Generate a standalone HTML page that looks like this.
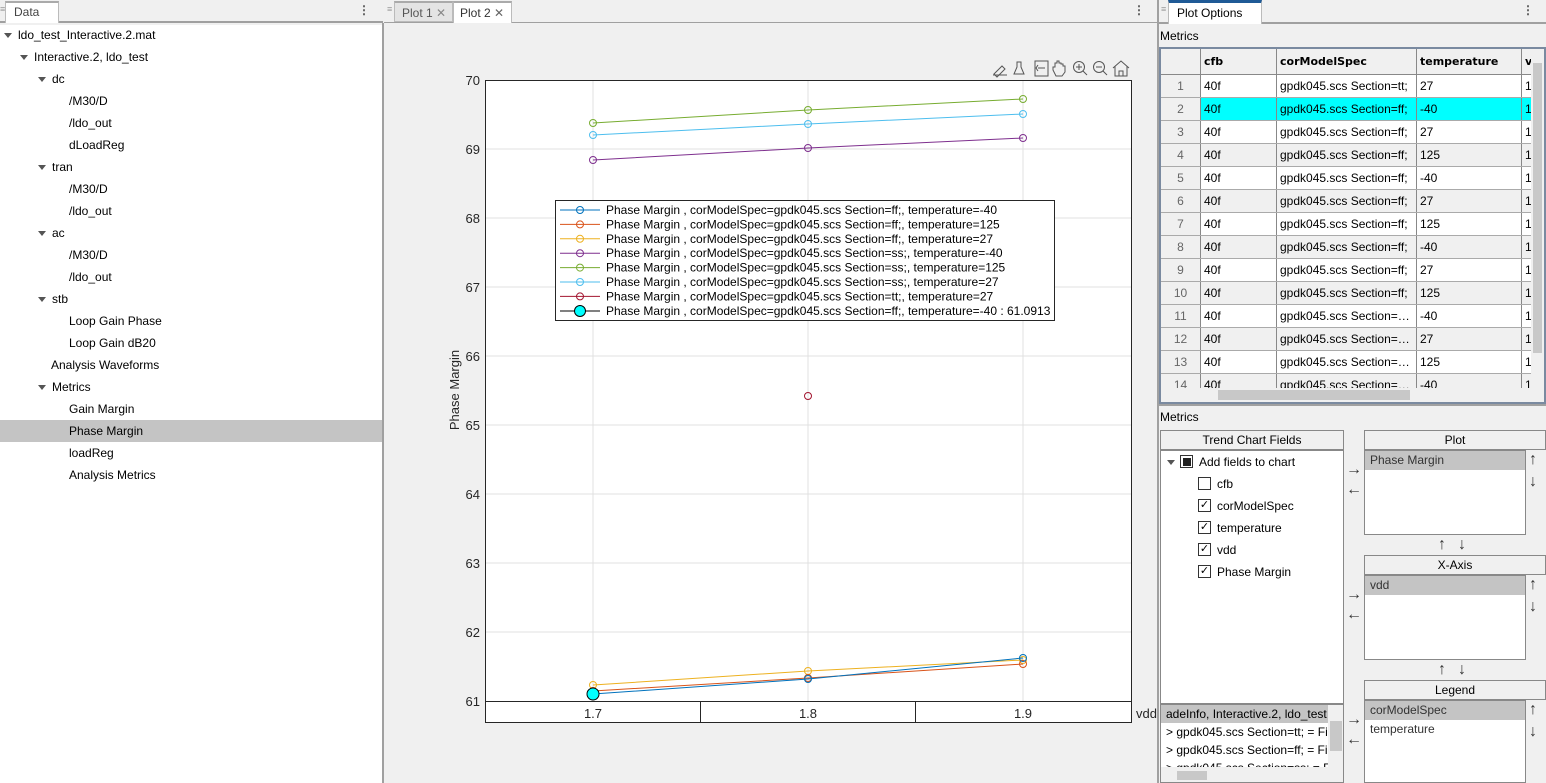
<!DOCTYPE html>
<html><head><meta charset="utf-8"><style>
*{box-sizing:border-box;margin:0;padding:0}
body{width:1546px;height:783px;overflow:hidden;background:#f0f0f0;font-family:"Liberation Sans",sans-serif;font-size:12px;color:#000;position:relative}
.a{position:absolute}
.t{position:absolute;white-space:nowrap}
.tri{display:inline-block;width:0;height:0;border-left:4px solid transparent;border-right:4px solid transparent;border-top:5px solid #555;margin-right:6px;vertical-align:1px}
.cb{position:absolute;width:13px;height:13px;border:1px solid #333;background:#fff;font-size:11px;line-height:11px;text-align:center}
.ar{position:absolute;font-size:16px;font-weight:bold;color:#333;line-height:16px}
</style></head><body>

<div class="a" style="left:0;top:0;width:383px;height:23px;background:#f0f0f0;border-bottom:2px solid #a0a0a0"></div>
<div class="a" style="left:5px;top:1px;width:54px;height:22px;background:#fff;border:1px solid #bbb;border-top:2px solid #aaa;border-bottom:none"></div>
<div class="t" style="left:14px;top:5px;color:#444">Data</div>
<div class="t" style="left:0;top:4px;color:#999;font-size:9px">≡</div>
<div class="t" style="left:358px;top:3px;font-weight:bold;color:#555">⋮</div>
<div class="a" style="left:0;top:25px;width:382px;height:758px;background:#fff"></div>
<div class="a" style="left:382px;top:23px;width:2px;height:760px;background:#a0a0a0"></div>
<div class="a" style="left:0;top:420px;width:382px;height:22px;background:#c4c4c4"></div>
<div class="t" style="left:4px;top:28px"><span class="tri"></span>ldo_test_Interactive.2.mat</div>
<div class="t" style="left:20px;top:50px"><span class="tri"></span>Interactive.2, ldo_test</div>
<div class="t" style="left:38px;top:72px"><span class="tri"></span>dc</div>
<div class="t" style="left:69px;top:94px">/M30/D</div>
<div class="t" style="left:69px;top:116px">/ldo_out</div>
<div class="t" style="left:69px;top:138px">dLoadReg</div>
<div class="t" style="left:38px;top:160px"><span class="tri"></span>tran</div>
<div class="t" style="left:69px;top:182px">/M30/D</div>
<div class="t" style="left:69px;top:204px">/ldo_out</div>
<div class="t" style="left:38px;top:226px"><span class="tri"></span>ac</div>
<div class="t" style="left:69px;top:248px">/M30/D</div>
<div class="t" style="left:69px;top:270px">/ldo_out</div>
<div class="t" style="left:38px;top:292px"><span class="tri"></span>stb</div>
<div class="t" style="left:69px;top:314px">Loop Gain Phase</div>
<div class="t" style="left:69px;top:336px">Loop Gain dB20</div>
<div class="t" style="left:51px;top:358px">Analysis Waveforms</div>
<div class="t" style="left:38px;top:380px"><span class="tri"></span>Metrics</div>
<div class="t" style="left:69px;top:402px">Gain Margin</div>
<div class="t" style="left:69px;top:424px">Phase Margin</div>
<div class="t" style="left:69px;top:446px">loadReg</div>
<div class="t" style="left:69px;top:468px">Analysis Metrics</div>

<div class="a" style="left:384px;top:22px;width:773px;height:1px;background:#a0a0a0"></div>
<div class="t" style="left:387px;top:4px;color:#999;font-size:9px">≡</div>
<div class="a" style="left:394px;top:1px;width:59px;height:21px;background:#e4e4e4;border:1px solid #bbb;border-top:2px solid #aaa"></div>
<div class="t" style="left:402px;top:6px;color:#555">Plot 1 <span style="color:#888">✕</span></div>
<div class="a" style="left:453px;top:1px;width:59px;height:22px;background:#fff;border:1px solid #bbb;border-top:2px solid #aaa;border-bottom:none"></div>
<div class="t" style="left:460px;top:6px;color:#333">Plot 2 <span style="color:#666">✕</span></div>
<div class="t" style="left:1133px;top:3px;font-weight:bold;color:#555">⋮</div>
<div class="a" style="left:1157px;top:0;width:2px;height:783px;background:#a0a0a0"></div>

<svg class="a" style="left:384px;top:23px" width="773" height="760" viewBox="384 23 773 760" font-family="Liberation Sans, sans-serif">
<rect x="485.5" y="80.5" width="646" height="642" fill="#fff" stroke="#262626"/>
<g stroke="#e0e0e0">
<line x1="593" y1="81" x2="593" y2="701"/><line x1="808" y1="81" x2="808" y2="701"/><line x1="1023" y1="81" x2="1023" y2="701"/>
<line x1="486" y1="149" x2="1131" y2="149"/><line x1="486" y1="218" x2="1131" y2="218"/><line x1="486" y1="287" x2="1131" y2="287"/><line x1="486" y1="356" x2="1131" y2="356"/><line x1="486" y1="425" x2="1131" y2="425"/><line x1="486" y1="494" x2="1131" y2="494"/><line x1="486" y1="563" x2="1131" y2="563"/><line x1="486" y1="632" x2="1131" y2="632"/>
</g>
<line x1="486" y1="701.5" x2="1131" y2="701.5" stroke="#262626"/>
<line x1="700.5" y1="701" x2="700.5" y2="722" stroke="#262626"/><line x1="915.5" y1="701" x2="915.5" y2="722" stroke="#262626"/>
<g font-size="13" fill="#262626" text-anchor="end">
<text x="480" y="85">70</text><text x="480" y="154">69</text><text x="480" y="223">68</text><text x="480" y="292">67</text><text x="480" y="361">66</text><text x="480" y="430">65</text><text x="480" y="499">64</text><text x="480" y="568">63</text><text x="480" y="637">62</text><text x="480" y="706">61</text>
</g>
<g font-size="13" fill="#262626" text-anchor="middle"><text x="593" y="718">1.7</text><text x="808" y="718">1.8</text><text x="1023" y="718">1.9</text></g>
<text x="1136" y="718" font-size="13" fill="#262626">vdd</text>
<text transform="translate(459,390) rotate(-90)" font-size="13" fill="#262626" text-anchor="middle">Phase Margin</text>
<g fill="none" stroke-width="1">
<g stroke="#77AC30"><polyline points="593,123 808,110 1023,99"/><circle cx="593" cy="123" r="3.5"/><circle cx="808" cy="110" r="3.5"/><circle cx="1023" cy="99" r="3.5"/></g>
<g stroke="#4DBEEE"><polyline points="593,135 808,124 1023,114"/><circle cx="593" cy="135" r="3.5"/><circle cx="808" cy="124" r="3.5"/><circle cx="1023" cy="114" r="3.5"/></g>
<g stroke="#7E2F8E"><polyline points="593,160 808,148 1023,138"/><circle cx="593" cy="160" r="3.5"/><circle cx="808" cy="148" r="3.5"/><circle cx="1023" cy="138" r="3.5"/></g>
<g stroke="#A2142F"><circle cx="808" cy="396" r="3.5"/></g>
<g stroke="#EDB120"><polyline points="593,685 808,671 1023,660"/><circle cx="593" cy="685" r="3.5"/><circle cx="808" cy="671" r="3.5"/><circle cx="1023" cy="660" r="3.5"/></g>
<g stroke="#D95319"><polyline points="593,691 808,678 1023,664"/><circle cx="593" cy="691" r="3.5"/><circle cx="808" cy="678" r="3.5"/><circle cx="1023" cy="664" r="3.5"/></g>
<g stroke="#0072BD"><polyline points="593,694 808,679 1023,658"/><circle cx="808" cy="679" r="3.5"/><circle cx="1023" cy="658" r="3.5"/></g>
</g>
<circle cx="593" cy="694" r="6" fill="#00ffff" stroke="#000"/>
<rect x="555.5" y="200.5" width="499" height="120" fill="#fff" stroke="#262626"/>
<g font-size="12" fill="#000">
<g transform="translate(0,210)"><line x1="560" x2="600" stroke="#0072BD"/><circle cx="580" r="3.5" fill="none" stroke="#0072BD"/><text x="606" y="4">Phase Margin , corModelSpec=gpdk045.scs Section=ff;, temperature=-40</text></g>
<g transform="translate(0,224.4)"><line x1="560" x2="600" stroke="#D95319"/><circle cx="580" r="3.5" fill="none" stroke="#D95319"/><text x="606" y="4">Phase Margin , corModelSpec=gpdk045.scs Section=ff;, temperature=125</text></g>
<g transform="translate(0,238.8)"><line x1="560" x2="600" stroke="#EDB120"/><circle cx="580" r="3.5" fill="none" stroke="#EDB120"/><text x="606" y="4">Phase Margin , corModelSpec=gpdk045.scs Section=ff;, temperature=27</text></g>
<g transform="translate(0,253.2)"><line x1="560" x2="600" stroke="#7E2F8E"/><circle cx="580" r="3.5" fill="none" stroke="#7E2F8E"/><text x="606" y="4">Phase Margin , corModelSpec=gpdk045.scs Section=ss;, temperature=-40</text></g>
<g transform="translate(0,267.6)"><line x1="560" x2="600" stroke="#77AC30"/><circle cx="580" r="3.5" fill="none" stroke="#77AC30"/><text x="606" y="4">Phase Margin , corModelSpec=gpdk045.scs Section=ss;, temperature=125</text></g>
<g transform="translate(0,282)"><line x1="560" x2="600" stroke="#4DBEEE"/><circle cx="580" r="3.5" fill="none" stroke="#4DBEEE"/><text x="606" y="4">Phase Margin , corModelSpec=gpdk045.scs Section=ss;, temperature=27</text></g>
<g transform="translate(0,296.4)"><line x1="560" x2="600" stroke="#A2142F"/><circle cx="580" r="3.5" fill="none" stroke="#A2142F"/><text x="606" y="4">Phase Margin , corModelSpec=gpdk045.scs Section=tt;, temperature=27</text></g>
<g transform="translate(0,311)"><line x1="560" x2="600" stroke="#000"/><circle cx="580" r="5.5" fill="#00ffff" stroke="#000"/><text x="606" y="4">Phase Margin , corModelSpec=gpdk045.scs Section=ff;, temperature=-40 : 61.0913</text></g>
</g>
<g fill="none" stroke="#555" stroke-width="1">
<path d="M994 74 l8 -8 l3 3 l-8 8 z M993 75 h14"/>
<path d="M1017 62 h4 v5 l3 7 h-10 l3 -7 z"/>
<rect x="1035" y="61" width="13" height="15"/><path d="M1038 68 h7 M1038 65 l-2 3 l2 3"/>
<path d="M1056 76 l-3 -6 v-3 h2 v-4 h2 v-2 h2 v2 h2 v1 h2 v2 h2 v6 l-3 4 z"/>
<circle cx="1079" cy="67" r="5.5"/><path d="M1083 71 l4 4 M1076 67 h6 M1079 64 v6"/>
<circle cx="1099" cy="67" r="5.5"/><path d="M1103 71 l4 4 M1096 67 h6"/>
<path d="M1113 68 l8 -7 l8 7 M1115 66 v10 h12 v-10 M1119 76 v-5 h4 v5"/>
</g>
</svg>

<div class="a" style="left:1159px;top:22px;width:387px;height:2px;background:#a0a0a0"></div>
<div class="t" style="left:1161px;top:4px;color:#999;font-size:9px">≡</div>
<div class="a" style="left:1168px;top:0;width:94px;height:24px;background:#fff;border:1px solid #bbb;border-top:3px solid #1f5a96;border-bottom:none"></div>
<div class="t" style="left:1177px;top:6px">Plot Options</div>
<div class="t" style="left:1522px;top:3px;font-weight:bold;color:#555">⋮</div>
<div class="t" style="left:1160px;top:29px">Metrics</div>
<div class="a" style="left:1159px;top:47px;width:387px;height:357px;border:2px solid #7a8aa0;background:#fff;overflow:hidden"></div>
<div class="a" style="left:1159px;top:404px;width:387px;height:2px;background:#a0a0a0"></div>
<div class="t" style="left:1160px;top:410px">Metrics</div>

<div class="a" style="left:1160px;top:430px;width:184px;height:20px;border:1px solid #888;background:#f0f0f0;text-align:center;line-height:18px">Trend Chart Fields</div>
<div class="a" style="left:1160px;top:450px;width:184px;height:254px;border:1px solid #888;background:#fff"></div>
<div class="t" style="left:1167px;top:455px"><span class="tri"></span></div>
<div class="cb" style="left:1180px;top:455px"><div style="width:8px;height:8px;background:#222;margin:2px"></div></div>
<div class="t" style="left:1199px;top:455px">Add fields to chart</div>
<div class="cb" style="left:1198px;top:477px"></div><div class="t" style="left:1217px;top:477px">cfb</div>
<div class="cb" style="left:1198px;top:499px">✓</div><div class="t" style="left:1217px;top:499px">corModelSpec</div>
<div class="cb" style="left:1198px;top:521px">✓</div><div class="t" style="left:1217px;top:521px">temperature</div>
<div class="cb" style="left:1198px;top:543px">✓</div><div class="t" style="left:1217px;top:543px">vdd</div>
<div class="cb" style="left:1198px;top:565px">✓</div><div class="t" style="left:1217px;top:565px">Phase Margin</div>
<div class="a" style="left:1160px;top:704px;width:184px;height:79px;border:1px solid #888;background:#fff;overflow:hidden">
<div style="height:18px;background:#c4c4c4;padding-left:5px;line-height:18px;white-space:nowrap">adeInfo, Interactive.2, ldo_test</div>
<div style="padding-left:5px;line-height:18px;white-space:nowrap">&gt; gpdk045.scs Section=tt; = Fi</div>
<div style="padding-left:5px;line-height:18px;white-space:nowrap">&gt; gpdk045.scs Section=ff; = Fi</div>
<div style="padding-left:5px;line-height:18px;white-space:nowrap">&gt; gpdk045.scs Section=ss; = F</div>
<div class="a" style="left:167px;top:0;width:16px;height:62px;background:#f0f0f0"><div style="margin:16px 2px;height:30px;background:#c8c8c8"></div></div>
<div class="a" style="left:0;top:62px;width:183px;height:16px;background:#f0f0f0"><div style="margin:4px 16px;width:30px;height:9px;background:#c8c8c8"></div></div>
</div>

<div class="ar" style="left:1346px;top:462px">→</div><div class="ar" style="left:1346px;top:482px">←</div>
<div class="ar" style="left:1346px;top:587px">→</div><div class="ar" style="left:1346px;top:607px">←</div>
<div class="ar" style="left:1346px;top:712px">→</div><div class="ar" style="left:1346px;top:732px">←</div>
<div class="ar" style="left:1438px;top:537px">↑</div><div class="ar" style="left:1458px;top:537px">↓</div>
<div class="ar" style="left:1438px;top:662px">↑</div><div class="ar" style="left:1458px;top:662px">↓</div>

<div class="a" style="left:1364px;top:430px;width:182px;height:20px;border:1px solid #888;background:#f0f0f0;text-align:center;line-height:18px">Plot</div>
<div class="a" style="left:1364px;top:450px;width:162px;height:85px;border:1px solid #888;background:#fff"><div style="height:19px;background:#c4c4c4;padding-left:5px;line-height:19px;color:#333">Phase Margin</div></div>
<div class="ar" style="left:1529px;top:452px">↑</div><div class="ar" style="left:1529px;top:474px">↓</div>
<div class="a" style="left:1364px;top:555px;width:182px;height:20px;border:1px solid #888;background:#f0f0f0;text-align:center;line-height:18px">X-Axis</div>
<div class="a" style="left:1364px;top:575px;width:162px;height:85px;border:1px solid #888;background:#fff"><div style="height:19px;background:#c4c4c4;padding-left:5px;line-height:19px;color:#333">vdd</div></div>
<div class="ar" style="left:1529px;top:577px">↑</div><div class="ar" style="left:1529px;top:599px">↓</div>
<div class="a" style="left:1364px;top:680px;width:182px;height:20px;border:1px solid #888;background:#f0f0f0;text-align:center;line-height:18px">Legend</div>
<div class="a" style="left:1364px;top:700px;width:162px;height:83px;border:1px solid #888;background:#fff"><div style="height:19px;background:#c4c4c4;padding-left:5px;line-height:19px;color:#333">corModelSpec</div><div style="padding-left:5px;line-height:19px;color:#333">temperature</div></div>
<div class="ar" style="left:1529px;top:702px">↑</div><div class="ar" style="left:1529px;top:724px">↓</div>

<div class="a" style="left:1161px;top:49px;width:370px;height:339px;overflow:hidden;background:#fff">
<div class="a" style="left:0;top:0;width:370px;height:26px;background:#f0f0f0;border-bottom:1px solid #888"></div>
<div class="t" style="left:43px;top:6px;font-weight:bold;font-family:'DejaVu Sans',sans-serif;font-size:11px">cfb</div>
<div class="t" style="left:119px;top:6px;font-weight:bold;font-family:'DejaVu Sans',sans-serif;font-size:11px">corModelSpec</div>
<div class="t" style="left:259px;top:6px;font-weight:bold;font-family:'DejaVu Sans',sans-serif;font-size:11px">temperature</div>
<div class="t" style="left:364px;top:6px;font-weight:bold;font-family:'DejaVu Sans',sans-serif;font-size:11px">v</div>
<div class="a" style="left:0;top:26px;width:39px;height:313px;background:#f0f0f0"></div>
<div class="a" style="left:39px;top:49px;width:331px;height:23px;background:#00ffff"></div>
<div class="a" style="left:39px;top:95px;width:331px;height:23px;background:#f0f0f0"></div>
<div class="a" style="left:39px;top:141px;width:331px;height:23px;background:#f0f0f0"></div>
<div class="a" style="left:39px;top:187px;width:331px;height:23px;background:#f0f0f0"></div>
<div class="a" style="left:39px;top:233px;width:331px;height:23px;background:#f0f0f0"></div>
<div class="a" style="left:39px;top:279px;width:331px;height:23px;background:#f0f0f0"></div>
<div class="a" style="left:39px;top:325px;width:331px;height:23px;background:#f0f0f0"></div>
<div class="a" style="left:39px;top:0;width:1px;height:339px;background:#888"></div>
<div class="a" style="left:115px;top:0;width:1px;height:339px;background:#888"></div>
<div class="a" style="left:255px;top:0;width:1px;height:339px;background:#888"></div>
<div class="a" style="left:360px;top:0;width:1px;height:339px;background:#888"></div>
<div style="position:absolute;left:0;top:26px;width:370px">
<style>.r{height:23px;border-bottom:1px solid #aaa;position:relative;white-space:nowrap}.r span{position:absolute;top:4px}</style>
<div class="r"><span style="left:0;width:39px;text-align:center;color:#666">1</span><span style="left:43px">40f</span><span style="left:119px">gpdk045.scs Section=tt;</span><span style="left:259px">27</span><span style="left:364px">1</span></div>
<div class="r"><span style="left:0;width:39px;text-align:center;color:#666">2</span><span style="left:43px">40f</span><span style="left:119px">gpdk045.scs Section=ff;</span><span style="left:259px">-40</span><span style="left:364px">1</span></div>
<div class="r"><span style="left:0;width:39px;text-align:center;color:#666">3</span><span style="left:43px">40f</span><span style="left:119px">gpdk045.scs Section=ff;</span><span style="left:259px">27</span><span style="left:364px">1</span></div>
<div class="r"><span style="left:0;width:39px;text-align:center;color:#666">4</span><span style="left:43px">40f</span><span style="left:119px">gpdk045.scs Section=ff;</span><span style="left:259px">125</span><span style="left:364px">1</span></div>
<div class="r"><span style="left:0;width:39px;text-align:center;color:#666">5</span><span style="left:43px">40f</span><span style="left:119px">gpdk045.scs Section=ff;</span><span style="left:259px">-40</span><span style="left:364px">1</span></div>
<div class="r"><span style="left:0;width:39px;text-align:center;color:#666">6</span><span style="left:43px">40f</span><span style="left:119px">gpdk045.scs Section=ff;</span><span style="left:259px">27</span><span style="left:364px">1</span></div>
<div class="r"><span style="left:0;width:39px;text-align:center;color:#666">7</span><span style="left:43px">40f</span><span style="left:119px">gpdk045.scs Section=ff;</span><span style="left:259px">125</span><span style="left:364px">1</span></div>
<div class="r"><span style="left:0;width:39px;text-align:center;color:#666">8</span><span style="left:43px">40f</span><span style="left:119px">gpdk045.scs Section=ff;</span><span style="left:259px">-40</span><span style="left:364px">1</span></div>
<div class="r"><span style="left:0;width:39px;text-align:center;color:#666">9</span><span style="left:43px">40f</span><span style="left:119px">gpdk045.scs Section=ff;</span><span style="left:259px">27</span><span style="left:364px">1</span></div>
<div class="r"><span style="left:0;width:39px;text-align:center;color:#666">10</span><span style="left:43px">40f</span><span style="left:119px">gpdk045.scs Section=ff;</span><span style="left:259px">125</span><span style="left:364px">1</span></div>
<div class="r"><span style="left:0;width:39px;text-align:center;color:#666">11</span><span style="left:43px">40f</span><span style="left:119px">gpdk045.scs Section=…</span><span style="left:259px">-40</span><span style="left:364px">1</span></div>
<div class="r"><span style="left:0;width:39px;text-align:center;color:#666">12</span><span style="left:43px">40f</span><span style="left:119px">gpdk045.scs Section=…</span><span style="left:259px">27</span><span style="left:364px">1</span></div>
<div class="r"><span style="left:0;width:39px;text-align:center;color:#666">13</span><span style="left:43px">40f</span><span style="left:119px">gpdk045.scs Section=…</span><span style="left:259px">125</span><span style="left:364px">1</span></div>
<div class="r"><span style="left:0;width:39px;text-align:center;color:#666">14</span><span style="left:43px">40f</span><span style="left:119px">gpdk045.scs Section=…</span><span style="left:259px">-40</span><span style="left:364px">1</span></div>
</div>
</div>
<div class="a" style="left:1531px;top:49px;width:13px;height:339px;background:#f0f0f0"><div style="margin:14px 2px;height:290px;background:#c8c8c8"></div></div>
<div class="a" style="left:1161px;top:388px;width:383px;height:14px;background:#f0f0f0"><div style="margin:2px 0 0 57px;width:192px;height:10px;background:#c8c8c8"></div></div>
</body></html>
